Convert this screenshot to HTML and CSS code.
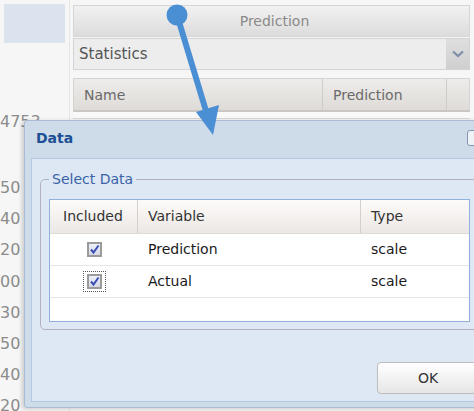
FILE: index.html
```html
<!DOCTYPE html>
<html>
<head>
<meta charset="utf-8">
<link rel="stylesheet" href="styles.css">
</head>
<body>
<div class="page">
  <div class="left">
    <div class="topbox"></div>
    <div class="first">4753</div>
    <div class="nums">
      <div class="num">50</div>
      <div class="num">40</div>
      <div class="num">20</div>
      <div class="num">00</div>
      <div class="num">30</div>
      <div class="num">50</div>
      <div class="num">40</div>
      <div class="num">20</div>
    </div>
  </div>
  <div class="panel">
    <div class="hdr">Prediction</div>
    <div class="dd">
      <span class="dd-text">Statistics</span>
      <span class="dd-btn">
        <svg width="12" height="8" viewBox="0 0 12 8"><path d="M1 1.5 L6 6 L11 1.5" fill="none" stroke="#7d8ea6" stroke-width="2.2"/></svg>
      </span>
    </div>
    <div class="thead">
      <div class="th">Name</div>
      <div class="th">Prediction</div>
      <div class="th"></div>
    </div>
    <div class="trow"></div>
  </div>
</div>

<div class="dialog">
  <div class="title">
    <span>Data</span>
    <span class="ticon"></span>
  </div>
  <div class="dbody">
    <fieldset class="fs">
      <legend>Select Data</legend>
      <div class="grid">
        <div class="ghead">
          <div class="gh">Included</div>
          <div class="gh">Variable</div>
          <div class="gh">Type</div>
        </div>
        <div class="grow">
          <div class="gc center"><span class="cb"><svg width="11" height="11" viewBox="0 0 11 11"><path d="M2 5.5 L4.5 8.5 L9.5 1.5" fill="none" stroke="#3b4fb4" stroke-width="2"/></svg></span></div>
          <div class="gc">Prediction</div>
          <div class="gc">scale</div>
        </div>
        <div class="grow">
          <div class="gc center"><span class="focus"><span class="cb"><svg width="11" height="11" viewBox="0 0 11 11"><path d="M2 5.5 L4.5 8.5 L9.5 1.5" fill="none" stroke="#3b4fb4" stroke-width="2"/></svg></span></span></div>
          <div class="gc">Actual</div>
          <div class="gc">scale</div>
        </div>
      </div>
    </fieldset>
    <div class="actions">
      <button class="ok">OK</button>
    </div>
  </div>
</div>

<svg class="arrow" width="474" height="411" viewBox="0 0 474 411">
  <line x1="177" y1="15" x2="206" y2="111" stroke="#4a8ed4" stroke-width="6"/>
  <circle cx="177" cy="15" r="10.5" fill="#4a8ed4"/>
  <polygon points="196,112 219,105 213,135" fill="#4a8ed4"/>
</svg>
</body>
</html>
```

FILE: styles.css
```css
html, body {
  margin: 0;
  padding: 0;
}
body {
  width: 474px;
  height: 411px;
  overflow: hidden;
  position: relative;
  background: #f6f6f6;
  font-family: "DejaVu Sans", Verdana, sans-serif;
  font-size: 14px;
}
.page {
  display: flex;
  height: 411px;
  overflow: hidden;
}
.left {
  width: 70px;
  display: flex;
  flex-direction: column;
  border-right: 1px solid #e6e6e6;
  box-sizing: border-box;
}
.left > * {
  flex: none;
}
.topbox {
  margin: 4px 0 0 4px;
  width: 61px;
  height: 39px;
  background: #dbe4ee;
}
.first {
  margin-top: 63px;
  height: 31px;
  line-height: 31px;
  font-size: 16px;
  color: #8c8c8c;
  white-space: nowrap;
}
.nums {
  margin-top: 35px;
  display: flex;
  flex-direction: column;
}
.num {
  flex: none;
  height: 31.2px;
  line-height: 31px;
  font-size: 16px;
  color: #8c8c8c;
  white-space: nowrap;
}
.panel {
  margin: 5px 0 0 3px;
  width: 397px;
}
.hdr {
  height: 32px;
  box-sizing: border-box;
  border: 1px solid #d6d6d6;
  background: linear-gradient(#f1f1f1, #dcdcdc);
  color: #8a8a8a;
  text-align: center;
  line-height: 30px;
  padding-left: 6px;
}
.dd {
  margin-top: 1px;
  height: 32px;
  box-sizing: border-box;
  border: 1px solid #d3d3d3;
  background: #ededed;
  display: flex;
  align-items: stretch;
}
.dd-text {
  flex: 1;
  padding-left: 5px;
  line-height: 30px;
  font-size: 15px;
  color: #555;
}
.dd-btn {
  width: 23px;
  background: linear-gradient(#dedede, #cfcfcf);
  display: flex;
  align-items: center;
  justify-content: center;
}
.thead {
  margin-top: 8px;
  height: 34px;
  box-sizing: border-box;
  border: 1px solid #d6d3d0;
  border-bottom: 2px solid #c9c6c3;
  background: linear-gradient(#eeecea, #dedbd8);
  display: grid;
  grid-template-columns: 249px 124px 1fr;
}
.th {
  border-right: 1px solid #cfcbc8;
  line-height: 32px;
  padding-left: 10px;
  color: #6a6a6a;
}
.th:last-child {
  border-right: none;
}
.trow {
  height: 6px;
  background: #f9f9f9;
  border-bottom: 1px solid #d8d8d8;
}

.dialog {
  position: absolute;
  left: 24px;
  top: 120px;
  width: 470px;
  height: 288px;
  box-sizing: border-box;
  border: 1px solid #a9bcd3;
  border-radius: 3px 0 0 3px;
  background: #cedcea;
  box-shadow: -2px 1px 4px rgba(0, 0, 0, 0.18);
  padding: 0 0 5px 6px;
  display: flex;
  flex-direction: column;
}
.title {
  height: 37px;
  flex: none;
  display: flex;
  align-items: center;
  justify-content: space-between;
  padding-left: 5px;
  font-weight: bold;
  color: #1d4f95;
}
.title span:first-child {
  margin-top: -3px;
}
.ticon {
  width: 16px;
  height: 16px;
  box-sizing: border-box;
  border: 1px solid #8296b0;
  border-radius: 3px;
  background: #eef3f8;
  margin-right: 10px;
  margin-top: -4px;
}
.dbody {
  flex: 1;
  border: 1px solid #b2c8e3;
  border-right: none;
  background: #dde8f4;
  padding: 12px 0 0 8px;
  display: flex;
  flex-direction: column;
}
.fs {
  margin: 0;
  margin-right: -10px;
  padding: 11px 8px 7px 8px;
  border: 1px solid #b3b0c6;
  border-radius: 5px;
}
.fs legend {
  padding: 0 3px;
  margin-left: 0;
  color: #3b63a8;
  line-height: 17px;
}
.grid {
  width: 421px;
  height: 123px;
  box-sizing: border-box;
  border: 1px solid #8fb1dc;
  background: #fff;
}
.ghead {
  height: 33px;
  display: grid;
  grid-template-columns: 88px 223px 1fr;
  background: linear-gradient(#fdfbfa, #ebe7e4);
  border-bottom: 1px solid #dedad6;
}
.gh {
  border-right: 1px solid #d3cfcb;
  line-height: 33px;
  padding-left: 10px;
  color: #333;
}
.gh:first-child {
  padding-left: 13px;
}
.gh:last-child {
  border-right: none;
}
.grow {
  height: 31px;
  display: grid;
  grid-template-columns: 88px 223px 1fr;
  border-bottom: 1px solid #e6e6e6;
}
.gc {
  line-height: 31px;
  padding-left: 10px;
  color: #1a1a1a;
}
.gc.center {
  padding-left: 0;
  display: flex;
  align-items: center;
  justify-content: center;
}
.cb {
  width: 15px;
  height: 15px;
  box-sizing: border-box;
  border: 2px solid #9a9a9a;
  background: linear-gradient(#eef0f6, #d6d9e6);
  display: flex;
  align-items: center;
  justify-content: center;
}
.cb svg {
  flex: none;
}
.focus {
  padding: 2px 3px;
  border: 1px dotted #555;
  display: flex;
}
.actions {
  flex: 1;
  display: flex;
  justify-content: flex-end;
  align-items: flex-end;
  padding-bottom: 7px;
}
.ok {
  width: 100px;
  height: 32px;
  margin-right: 16px;
  box-sizing: border-box;
  border: 1px solid #bdbdbd;
  border-radius: 4px;
  background: linear-gradient(#ffffff, #e6e6e6);
  font-family: "DejaVu Sans", Verdana, sans-serif;
  font-size: 14px;
  color: #333;
  padding: 0 0 0 2px;
}
.arrow {
  position: absolute;
  left: 0;
  top: 0;
  pointer-events: none;
}
```
